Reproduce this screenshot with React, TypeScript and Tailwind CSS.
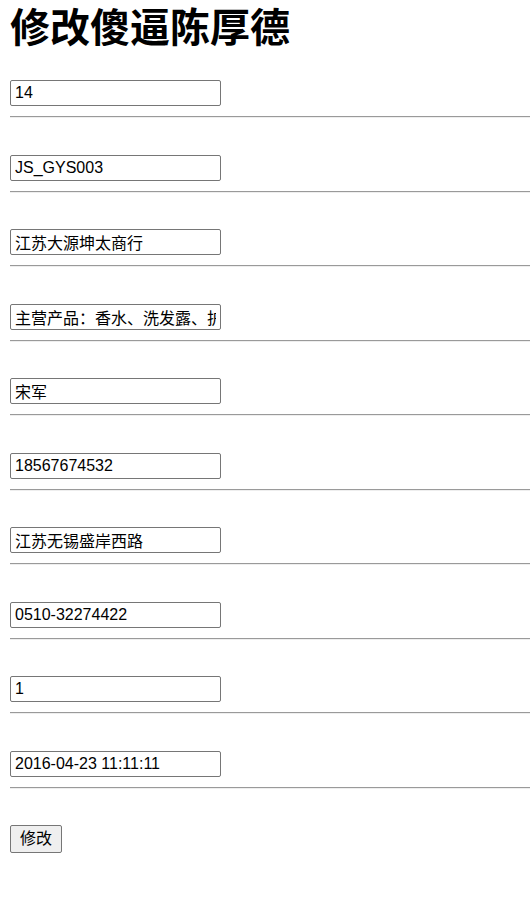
import React from 'react';

const fields = [
  '14',
  'JS_GYS003',
  '江苏大源坤太商行',
  '主营产品：香水、洗发露、护肤品',
  '宋军',
  '18567674532',
  '江苏无锡盛岸西路',
  '0510-32274422',
  '1',
  '2016-04-23 11:11:11',
];

const font = { fontFamily: '"Liberation Sans", "Noto Sans CJK SC", sans-serif' };

export default function App() {
  return (
    <div className="min-h-screen bg-white pl-[10px] text-black" style={font}>
      <h1 className="pt-[4px] text-[40px] font-bold leading-[48px] tracking-[0px]">修改傻逼陈厚德</h1>
      <form className="mt-[28px]" onSubmit={(e) => e.preventDefault()}>
        {fields.map((value, i) => (
          <div key={i} className={i === 0 ? '' : 'mt-[36.5px]'}>
            <input
              type="text"
              defaultValue={value}
              className="block h-[26px] w-[211px] rounded-[2px] border border-[#767676] bg-white px-[4px] text-[16px] leading-[24px] text-black outline-none"
            />
            <div className="mt-[10px] h-[2px] border-t border-b border-t-[#9a9a9a] border-b-[#eeeeee]" />
          </div>
        ))}
        <button
          type="submit"
          className="mt-[36px] h-[28px] rounded-[2px] border border-[#767676] bg-[#efefef] px-[9px] text-[16px] leading-[26px] text-black"
        >
          修改
        </button>
      </form>
    </div>
  );
}
